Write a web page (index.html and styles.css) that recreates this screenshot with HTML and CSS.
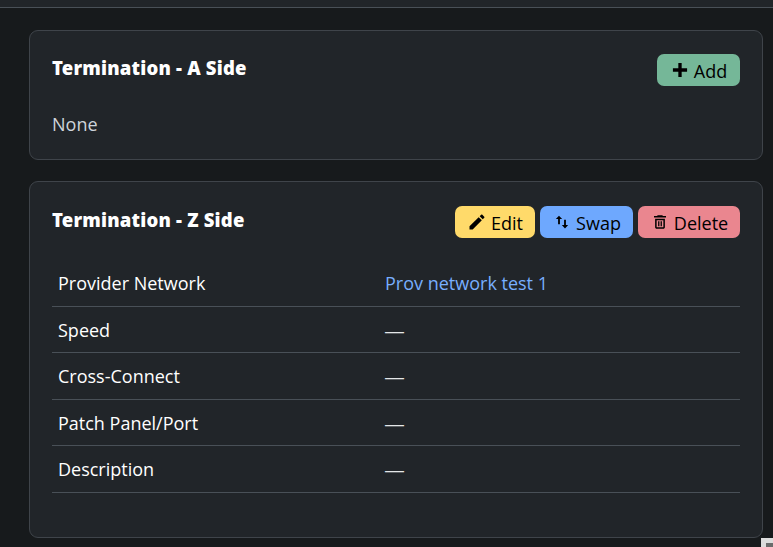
FILE: index.html
```html
<!DOCTYPE html>
<html lang="en">
<head>
  <meta charset="UTF-8" />
  <meta name="viewport" content="width=device-width, initial-scale=1.0" />
  <title>Circuit Terminations</title>
  <link rel="stylesheet" href="styles.css">
</head>
<body>
  <div class="top-strip"></div>

  <div class="content">
    <div class="card card-a">
      <div class="card-head">
        <h2>Termination - A Side</h2>
        <div class="actions">
          <a href="#" class="btn btn-add">
            <svg class="icon" viewBox="0 0 24 24"><path d="M10 3.500h4V10h6.500v4H14v6.500h-4V14H3.500v-4H10z" fill="currentColor"/></svg>
            Add
          </a>
        </div>
      </div>
      <p class="none">None</p>
    </div>

    <div class="card card-z">
      <div class="card-head">
        <h2>Termination - Z Side</h2>
        <div class="actions">
          <a href="#" class="btn btn-edit">
            <svg class="icon" viewBox="0 0 24 24"><path d="M3 17.200V21h3.800L17.800 9.900l-3.800-3.700zM20.700 7c.4-.4.4-1 0-1.400l-2.300-2.300c-.4-.4-1-.4-1.400 0l-1.800 1.800 3.700 3.700z" fill="currentColor"/></svg>
            Edit
          </a>
          <a href="#" class="btn btn-swap">
            <svg class="icon icon-sm" viewBox="0 0 24 24"><path d="M8 3.500 3.800 8h3v7h2.400V8h3zM16 20.500l4.200-4.500h-3V9h-2.400v7h-3z" fill="currentColor"/></svg>
            Swap
          </a>
          <a href="#" class="btn btn-delete">
            <svg class="icon icon-sm" viewBox="0 0 24 24"><path d="M9 3h6l1 1h4v2H4V4h4zM5.500 7.500h13V19c0 1.100-.9 2-2 2h-9c-1.100 0-2-.9-2-2zm2 2V19h9V9.500zM9.500 11h1.700v6.500H9.500zm3.300 0h1.700v6.500h-1.700z" fill="currentColor" fill-rule="evenodd"/></svg>
            Delete
          </a>
        </div>
      </div>

      <table class="attrs">
        <tr>
          <th>Provider Network</th>
          <td><a href="#">Prov network test 1</a></td>
        </tr>
        <tr>
          <th>Speed</th>
          <td><span class="dash">&mdash;</span></td>
        </tr>
        <tr>
          <th>Cross-Connect</th>
          <td><span class="dash">&mdash;</span></td>
        </tr>
        <tr>
          <th>Patch Panel/Port</th>
          <td><span class="dash">&mdash;</span></td>
        </tr>
        <tr>
          <th>Description</th>
          <td><span class="dash">&mdash;</span></td>
        </tr>
      </table>
    </div>
  </div>

  <div class="scroll-corner"></div>
</body>
</html>
```

FILE: styles.css
```css
html, body {
  height: 100%;
}
body {
  font-family: "Open Sans", "Noto Sans", sans-serif;
  font-size: 18px;
  background-color: #171a1c;
  color: #fff;
  margin: 0;
  overflow: hidden;
}
.top-strip {
  height: 7px;
  background-color: #212529;
  border-bottom: 1px solid #495057;
}
.content {
  padding: 22px 10px 0 29px;
}
.card {
  background-color: #212529;
  border: 1px solid #3f444a;
  border-radius: 9px;
  padding: 23px 22px 0 22px;
  box-sizing: border-box;
}
.card-a {
  height: 130px;
  margin-bottom: 21px;
}
.card-z {
  height: 357px;
  padding-top: 24px;
}
.card-head {
  display: flex;
  justify-content: space-between;
  align-items: flex-start;
}
h2 {
  font-family: "Noto Sans", sans-serif;
  font-size: 18.5px;
  font-weight: 900;
  letter-spacing: 0.2px;
  line-height: 24px;
  margin: 2px 0 0 0;
  color: #fff;
}
.none {
  margin: 26px 0 0 0;
  font-size: 18px;
  line-height: 24px;
  color: #ced4da;
}
.actions {
  display: flex;
  gap: 5px;
}
.btn {
  display: flex;
  align-items: center;
  justify-content: center;
  gap: 4px;
  height: 32px;
  padding-top: 1px;
  box-sizing: border-box;
  border-radius: 7px;
  color: #000;
  text-decoration: none;
  font-size: 18px;
}
.icon {
  width: 20px;
  height: 20px;
  margin-top: -1px;
}
.icon-sm {
  width: 18px;
  height: 18px;
  margin-left: 1px;
  margin-right: 1px;
}
.btn-add {
  width: 83px;
  background-color: #75b798;
}
.btn-edit {
  width: 80px;
  background-color: #ffda6a;
}
.btn-swap {
  width: 93px;
  background-color: #6ea8fe;
}
.btn-delete {
  width: 102px;
  background-color: #ea868f;
}
.attrs {
  width: 100%;
  border-collapse: collapse;
  margin-top: 22.2px;
  table-layout: fixed;
  font-size: 18px;
}
.attrs th, .attrs td {
  height: 44.5px;
  padding: 1px 6px 0 6px;
  border-bottom: 1px solid #495057;
  text-align: left;
  font-weight: 400;
}
.attrs th {
  width: 315px;
}
.attrs a {
  color: #78aefe;
  text-decoration: none;
}
.dash {
  font-family: "Liberation Sans", sans-serif;
  font-size: 19px;
  font-weight: 400;
  color: #e4e6e8;
}
.scroll-corner {
  position: absolute;
  right: 0;
  bottom: 0;
  width: 12px;
  height: 9px;
  background-color: #dcdcdc;
}
.scroll-corner::after {
  content: "";
  position: absolute;
  right: 0;
  bottom: 0;
  width: 7px;
  height: 4px;
  background-color: #6b6b6b;
}
```
